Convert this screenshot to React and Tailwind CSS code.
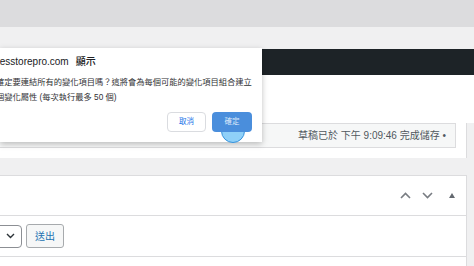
import React from "react"

const font = { fontFamily: '"Liberation Sans", "Noto Sans CJK TC", sans-serif' }

function Chevron({ up }) {
    return (
        <svg width="11" height="7" viewBox="0 0 11 7" fill="none" className="shrink-0">
            <path
                d={up ? "M1 6L5.5 1.5L10 6" : "M1 1L5.5 5.5L10 1"}
                stroke="#787c82"
                strokeWidth="1.6"
            />
        </svg>
    )
}

function ConfirmDialog() {
    return (
        <div className="absolute left-0 top-[48px] w-[262px] h-[94px] bg-white shadow-[0_2px_6px_rgba(0,0,0,0.25)]">
            <div className="relative h-full overflow-hidden">
                <p className="absolute left-[-3px] top-[7px] text-[10px] leading-[14px] font-medium text-[#202124] whitespace-nowrap">
                    tesstorepro.com<span className="ml-[7px]">顯示</span>
                </p>
                <div className="absolute left-[-4px] top-[27px] text-[8.25px] leading-[15px] text-[#303134] whitespace-nowrap">
                    <p>確定要連結所有的變化項目嗎？這將會為每個可能的變化項目組合建立</p>
                    <p>個變化屬性 (每次執行最多 50 個)</p>
                </div>
            </div>
            {/* click highlight sits under the buttons */}
            <div className="absolute left-[221px] top-[71px] w-[24px] h-[24px] rounded-full bg-[#8fd0f8] border-[1.5px] border-[#3592dc]" />
            <div className="absolute left-[167px] top-[64px] flex gap-[6px]">
                <button className="w-[39px] h-[20px] rounded-[4px] border border-[#dadce0] bg-white text-[7.5px] text-[#1a73e8]">
                    取消
                </button>
                <button className="relative w-[40px] h-[20px] rounded-[4px] bg-[#4a8edc] text-[7.5px] text-[#dbe9fa]">
                    確定
                </button>
            </div>
        </div>
    )
}

export default function App() {
    return (
        <div className="relative w-[474px] h-[266px] overflow-hidden bg-[#f0f0f1]" style={font}>
            <div className="h-[27px] bg-[#dcdcde]" />
            <div className="h-[22px] bg-[#f0f0f1]" />
            <div className="h-[26px] bg-[#1d2327]" />
            <div className="h-[48px] bg-white" />

            <div className="flex h-[35px]">
                <div className="w-[467px] bg-white border-r border-[#dcdcde]">
                    <div className="w-[456px] h-[25px] bg-[#f6f7f7] border-b border-r border-t border-[#dcdcde] flex items-center justify-end pr-[9px]">
                        <span className="text-[10px] text-[#50575e] whitespace-nowrap">
                            草稿已於 下午 9:09:46 完成儲存 •
                        </span>
                    </div>
                </div>
            </div>

            <div className="h-[17px]" />

            <div className="w-[467px] bg-white border-t border-r border-[#dcdcde] h-[91px]">
                <div className="h-[40px] border-b border-[#dcdcde] flex items-center justify-end pr-[11px]">
                    <Chevron up />
                    <span className="ml-[11px] flex">
                        <Chevron />
                    </span>
                    <span className="ml-[16px] w-0 h-0 shrink-0 border-l-[3.5px] border-r-[3.5px] border-b-[5px] border-l-transparent border-r-transparent border-b-[#646970]" />
                </div>
                <div className="flex items-center gap-[4px] mt-[8px] ml-[-20px]">
                    <div className="w-[42px] h-[23px] rounded-[4px] border border-[#8c8f94] bg-white flex items-center justify-end pr-[6px]">
                        <svg width="9" height="6" viewBox="0 0 9 6" fill="none">
                            <path d="M1 1L4.5 4.5L8 1" stroke="#2c3338" strokeWidth="1.4" />
                        </svg>
                    </div>
                    <button className="w-[38px] h-[24px] rounded-[3px] border border-[#a7aaad] bg-[#f6f7f7] text-[10px] text-[#2271b1]">
                        送出
                    </button>
                </div>
                <div className="mt-[8px] border-t border-[#dcdcde]" />
            </div>

            <ConfirmDialog />
        </div>
    )
}
